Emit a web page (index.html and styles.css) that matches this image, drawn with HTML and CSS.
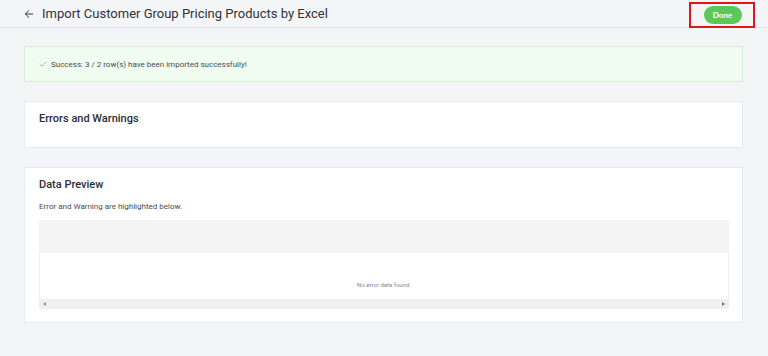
FILE: index.html
```html
<!DOCTYPE html>
<html lang="en">
<head>
<meta charset="utf-8">
<title>Import Customer Group Pricing Products by Excel</title>
<link rel="stylesheet" href="styles.css">
</head>
<body>
<header class="topbar">
  <div class="title-group">
    <svg class="back" width="10" height="10" viewBox="0 0 10 10"><path d="M9 5H1.5M5 1.3L1.3 5L5 8.7" fill="none" stroke="#333" stroke-width="1"/></svg>
    <h1 class="title">Import Customer Group Pricing Products by Excel</h1>
  </div>
  <div class="done-frame"><button class="done">Done</button></div>
</header>
<main class="content">
  <div class="alert">
    <svg class="check" width="8" height="6" viewBox="0 0 8 6"><path d="M0.6 3.2L2.8 5.2L7.4 0.6" fill="none" stroke="#8fd18f" stroke-width="1"/></svg>
    <span>Success: 3 / 2 row(s) have been imported successfully!</span>
  </div>
  <section class="card card-errors">
    <h2 class="card-title">Errors and Warnings</h2>
  </section>
  <section class="card card-preview">
    <h2 class="card-title">Data Preview</h2>
    <p class="hint">Error and Warning are highlighted below.</p>
    <div class="table">
      <div class="thead"></div>
      <div class="tbody">No error data found.</div>
      <div class="scrollbar">
        <span class="arrow left"></span>
        <span class="arrow right"></span>
      </div>
    </div>
  </section>
</main>
</body>
</html>
```
FILE: styles.css
```css
* { box-sizing: border-box; }
html, body { margin: 0; padding: 0; }
body {
  background: #f4f5f7;
  font-family: Roboto, "Liberation Sans", sans-serif;
  color: #333;
  width: 768px;
  height: 356px;
  overflow: hidden;
}
.topbar {
  height: 28px;
  border-bottom: 1px solid #e3e5e8;
  display: flex;
  align-items: center;
  justify-content: space-between;
  padding: 0 13px 0 24px;
}
.title-group { display: flex; align-items: center; gap: 8px; }
.back { display: block; margin-top: 1px; }
.title {
  margin: 0;
  font-size: 13px;
  font-weight: 400;
  color: #2f3237;
}
.done-frame {
  border: 2px solid #e3151b;
  width: 66px;
  height: 26px;
  display: flex;
  align-items: center;
  justify-content: center;
  margin-top: 2px;
}
.done {
  background: #5cc85a;
  color: #fff;
  border: none;
  border-radius: 10px;
  width: 38px;
  height: 18px;
  font-family: Lato, "Open Sans", sans-serif;
  font-size: 8px;
  font-weight: 700;
  padding: 0;
  margin-left: 1px;
}
.content {
  padding: 18px 25px 0 24px;
  display: flex;
  flex-direction: column;
  gap: 19px;
}
.alert {
  height: 36px;
  background: #f0fcf0;
  border: 1px solid #d7edd7;
  display: flex;
  align-items: center;
  gap: 4px;
  padding-left: 14px;
  font-size: 8px;
  color: #4a4d52;
}
.check { display: block; }
.card {
  background: #fff;
  border: 1px solid #e7e9ec;
  padding: 0 14px;
}
.card-errors { height: 47px; }
.card-preview { height: 156px; }
.card-title {
  margin: 0;
  font-size: 11px;
  font-weight: 500;
  color: #2b2e33;
  line-height: 13px;
  padding-top: 10px;
}
.hint {
  margin: 11px 0 0;
  font-size: 8px;
  line-height: 10px;
  color: #4a4d52;
}
.table {
  margin-top: 8px;
  width: 690px;
}
.thead {
  height: 33px;
  background: #f4f4f4;
}
.tbody {
  height: 46px;
  border-left: 1px solid #eee;
  border-right: 1px solid #eee;
  font-size: 6px;
  color: #888;
  display: flex;
  justify-content: center;
  align-items: flex-end;
  padding-bottom: 11px;
}
.scrollbar {
  height: 10px;
  background: #efefef;
  display: flex;
  justify-content: space-between;
  align-items: center;
  padding: 0 4px;
}
.arrow { width: 0; height: 0; border-top: 2px solid transparent; border-bottom: 2px solid transparent; }
.arrow.left { border-right: 3px solid #999; }
.arrow.right { border-left: 3px solid #777; }
```
